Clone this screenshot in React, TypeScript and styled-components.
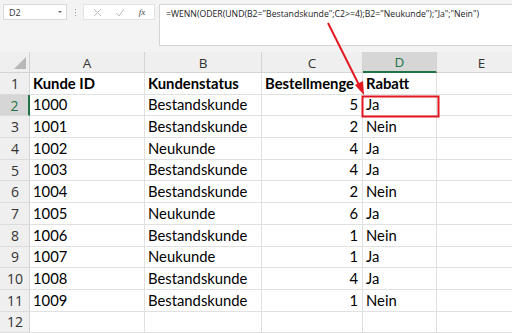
import React from "react";
import styled, { createGlobalStyle } from "styled-components";

const Global = createGlobalStyle`
  html, body { margin: 0; padding: 0; background: #fff; overflow: hidden; }
  * { box-sizing: border-box; }
`;

const Page = styled.div`
  position: relative;
  width: 512px;
  height: 333px;
  overflow: hidden;
  background: #f3f3f3;
  font-family: "Segoe UI", "Open Sans", "DejaVu Sans", sans-serif;
`;

const TopBar = styled.div`
  display: flex;
  align-items: flex-start;
  height: 52px;
  padding: 4px 0 0 3px;
`;

const NameBox = styled.div`
  width: 64px;
  height: 16px;
  background: #fff;
  border: 1px solid #dadada;
  display: flex;
  align-items: center;
  justify-content: space-between;
  padding: 0 4px 0 5px;
  font-size: 9px;
  color: #333;
`;

const Caret = styled.span`
  width: 0;
  height: 0;
  border-left: 2px solid transparent;
  border-right: 2px solid transparent;
  border-top: 2px solid #666;
`;

const Dots = styled.div`
  width: 16px;
  height: 16px;
  display: flex;
  flex-direction: column;
  align-items: center;
  justify-content: center;
  gap: 2px;
`;

const Dot = styled.span`
  width: 1px;
  height: 1px;
  background: #999;
`;

const FxGroup = styled.div`
  width: 72px;
  height: 16px;
  background: #fff;
  border: 1px solid #e2e2e2;
  display: flex;
  align-items: center;
  justify-content: space-around;
  padding: 0 2px;
  margin-right: 4px;
`;

const FxText = styled.span`
  font-family: "Liberation Serif", serif;
  font-style: italic;
  font-size: 9px;
  color: #444;
`;

const FormulaBox = styled.div`
  flex: 1;
  height: 42px;
  margin-right: -4px;
  background: #fff;
  border: 1px solid #d6d6d6;
  padding: 3px 0 0 6px;
  font-size: 8.7px;
  color: #222;
  white-space: nowrap;
`;

const Sheet = styled.div`
  display: grid;
  grid-template-columns: 30px 115px 117px 101px 74px 90px;
  grid-template-rows: 21px repeat(12, 21.7px);
  background: #fff;
`;

const Corner = styled.div`
  position: relative;
  background: #efefef;
  border-right: 1px solid #d4d4d4;
  border-bottom: 1px solid #d4d4d4;
  &::after {
    content: "";
    position: absolute;
    right: 3px;
    bottom: 3px;
    width: 0;
    height: 0;
    border-left: 12px solid transparent;
    border-bottom: 12px solid #b8b8b8;
  }
`;

const ColHead = styled.div<{ $sel?: boolean }>`
  background: ${(p) => (p.$sel ? "#d6d6d6" : "#efefef")};
  border-right: 1px solid #d4d4d4;
  border-bottom: ${(p) => (p.$sel ? "2px solid #217346" : "1px solid #d4d4d4")};
  color: ${(p) => (p.$sel ? "#217346" : "#333")};
  font-size: 13.5px;
  display: flex;
  align-items: center;
  justify-content: center;
  padding-top: 1px;
`;

const RowHead = styled.div<{ $sel?: boolean }>`
  background: ${(p) => (p.$sel ? "#d6d6d6" : "#efefef")};
  border-right: ${(p) => (p.$sel ? "2px solid #217346" : "1px solid #d4d4d4")};
  border-bottom: 1px solid #dcdcdc;
  color: ${(p) => (p.$sel ? "#217346" : "#333")};
  font-size: 14px;
  display: flex;
  align-items: center;
  justify-content: center;
  padding-left: 1px;
`;

const Cell = styled.div<{ $bold?: boolean; $num?: boolean }>`
  border-right: 1px solid #e1e1e1;
  border-bottom: 1px solid #e1e1e1;
  font-family: Lato, "Open Sans", sans-serif;
  font-size: 14.8px;
  font-weight: ${(p) => (p.$bold ? 700 : 400)};
  color: #000;
  display: flex;
  align-items: flex-end;
  justify-content: ${(p) => (p.$num ? "flex-end" : "flex-start")};
  padding: 0 4px 1px 3px;
  white-space: nowrap;
  overflow: visible;
  line-height: 19px;
`;

const Overlay = styled.svg`
  position: absolute;
  left: 0;
  top: 0;
  pointer-events: none;
`;

const data: [string, string, number, string][] = [
  ["1000", "Bestandskunde", 5, "Ja"],
  ["1001", "Bestandskunde", 2, "Nein"],
  ["1002", "Neukunde", 4, "Ja"],
  ["1003", "Bestandskunde", 4, "Ja"],
  ["1004", "Bestandskunde", 2, "Nein"],
  ["1005", "Neukunde", 6, "Ja"],
  ["1006", "Bestandskunde", 1, "Nein"],
  ["1007", "Neukunde", 1, "Ja"],
  ["1008", "Bestandskunde", 4, "Ja"],
  ["1009", "Bestandskunde", 1, "Nein"],
];

export default function App() {
  return (
    <>
      <Global />
      <Page>
        <TopBar>
          <NameBox>
            <span>D2</span>
            <Caret />
          </NameBox>
          <Dots>
            <Dot />
            <Dot />
            <Dot />
          </Dots>
          <FxGroup>
            <svg width="9" height="9" viewBox="0 0 9 9">
              <path d="M1 1 L8 8 M8 1 L1 8" stroke="#bdbdbd" strokeWidth="1" />
            </svg>
            <svg width="10" height="9" viewBox="0 0 10 9">
              <path d="M1 5 L4 8 L9 1" stroke="#bdbdbd" strokeWidth="1" fill="none" />
            </svg>
            <FxText>fx</FxText>
          </FxGroup>
          <FormulaBox>
            =WENN(ODER(UND(B2="Bestandskunde";C2&gt;=4);B2="Neukunde");"Ja";"Nein")
          </FormulaBox>
        </TopBar>
        <Sheet>
          <Corner />
          <ColHead>A</ColHead>
          <ColHead>B</ColHead>
          <ColHead>C</ColHead>
          <ColHead $sel>D</ColHead>
          <ColHead>E</ColHead>

          <RowHead>1</RowHead>
          <Cell $bold>Kunde ID</Cell>
          <Cell $bold>Kundenstatus</Cell>
          <Cell $bold>Bestellmenge</Cell>
          <Cell $bold>Rabatt</Cell>
          <Cell />

          {data.map(([id, status, qty, rabatt], i) => (
            <React.Fragment key={id}>
              <RowHead $sel={i === 0}>{i + 2}</RowHead>
              <Cell>{id}</Cell>
              <Cell>{status}</Cell>
              <Cell $num>{qty}</Cell>
              <Cell>{rabatt}</Cell>
              <Cell />
            </React.Fragment>
          ))}

          <RowHead>12</RowHead>
          <Cell />
          <Cell />
          <Cell />
          <Cell />
          <Cell />
        </Sheet>
        <Overlay width="512" height="333" viewBox="0 0 512 333">
          <rect x="362.5" y="96.5" width="76" height="20" fill="none" stroke="#e2171f" strokeWidth="2" />
          <line x1="328" y1="23" x2="359" y2="85" stroke="#e2171f" strokeWidth="2" />
          <polygon points="364,95 355,85 363,81" fill="#e2171f" />
        </Overlay>
      </Page>
    </>
  );
}
